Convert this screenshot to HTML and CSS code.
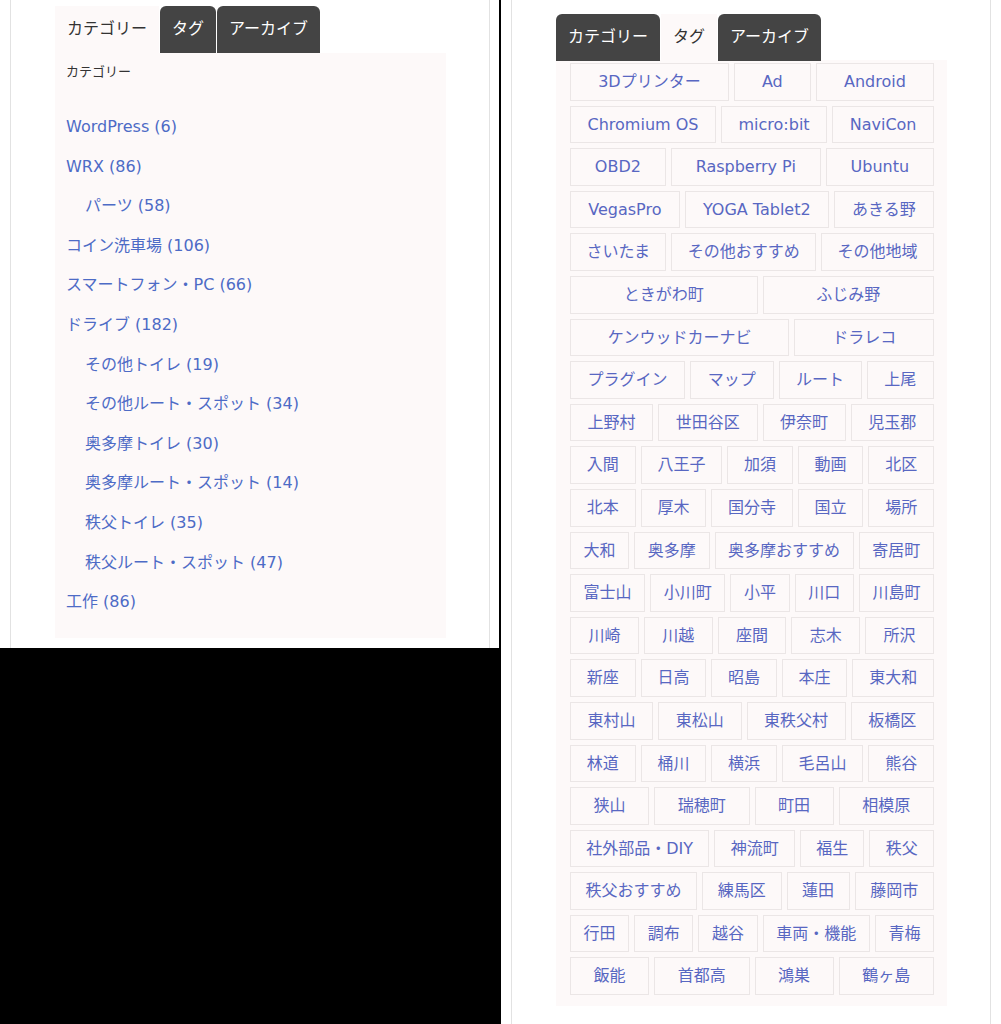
FILE: index.html
```html
<!DOCTYPE html>
<html lang="ja">
<head>
<meta charset="utf-8">
<title>カテゴリー / タグ</title>
<link rel="stylesheet" href="styles.css">
</head>
<body>
<div class="stage">
  <section class="shot shot-left">
    <div class="widget">
      <div class="tabs">
        <div class="tablist">
          <span class="tab active">カテゴリー</span><span class="tab">タグ</span><span class="tab">アーカイブ</span>
        </div>
        <div class="panel cat-panel">
          <h3 class="panel-title">カテゴリー</h3>
          <ul class="cats">
            <li><a href="#">WordPress (6)</a></li>
            <li><a href="#">WRX (86)</a>
              <ul class="sub">
                <li><a href="#">パーツ (58)</a></li>
              </ul>
            </li>
            <li><a href="#">コイン洗車場 (106)</a></li>
            <li><a href="#">スマートフォン・PC (66)</a></li>
            <li><a href="#">ドライブ (182)</a>
              <ul class="sub">
                <li><a href="#">その他トイレ (19)</a></li>
                <li><a href="#">その他ルート・スポット (34)</a></li>
                <li><a href="#">奥多摩トイレ (30)</a></li>
                <li><a href="#">奥多摩ルート・スポット (14)</a></li>
                <li><a href="#">秩父トイレ (35)</a></li>
                <li><a href="#">秩父ルート・スポット (47)</a></li>
              </ul>
            </li>
            <li><a href="#">工作 (86)</a></li>
          </ul>
        </div>
      </div>
    </div>
  </section>

  <section class="shot shot-right">
    <div class="widget">
      <div class="tabs">
        <div class="tablist">
          <span class="tab">カテゴリー</span><span class="tab active">タグ</span><span class="tab">アーカイブ</span>
        </div>
        <div class="panel tag-panel">
          <div class="tagcloud">
            <a href="#" class="tag">3Dプリンター</a>
            <a href="#" class="tag">Ad</a>
            <a href="#" class="tag">Android</a>
            <a href="#" class="tag">Chromium OS</a>
            <a href="#" class="tag">micro:bit</a>
            <a href="#" class="tag">NaviCon</a>
            <a href="#" class="tag">OBD2</a>
            <a href="#" class="tag">Raspberry Pi</a>
            <a href="#" class="tag">Ubuntu</a>
            <a href="#" class="tag">VegasPro</a>
            <a href="#" class="tag">YOGA Tablet2</a>
            <a href="#" class="tag">あきる野</a>
            <a href="#" class="tag">さいたま</a>
            <a href="#" class="tag">その他おすすめ</a>
            <a href="#" class="tag">その他地域</a>
            <a href="#" class="tag">ときがわ町</a>
            <a href="#" class="tag">ふじみ野</a>
            <a href="#" class="tag">ケンウッドカーナビ</a>
            <a href="#" class="tag">ドラレコ</a>
            <a href="#" class="tag">プラグイン</a>
            <a href="#" class="tag">マップ</a>
            <a href="#" class="tag">ルート</a>
            <a href="#" class="tag">上尾</a>
            <a href="#" class="tag">上野村</a>
            <a href="#" class="tag">世田谷区</a>
            <a href="#" class="tag">伊奈町</a>
            <a href="#" class="tag">児玉郡</a>
            <a href="#" class="tag">入間</a>
            <a href="#" class="tag">八王子</a>
            <a href="#" class="tag">加須</a>
            <a href="#" class="tag">動画</a>
            <a href="#" class="tag">北区</a>
            <a href="#" class="tag">北本</a>
            <a href="#" class="tag">厚木</a>
            <a href="#" class="tag">国分寺</a>
            <a href="#" class="tag">国立</a>
            <a href="#" class="tag">場所</a>
            <a href="#" class="tag">大和</a>
            <a href="#" class="tag">奥多摩</a>
            <a href="#" class="tag">奥多摩おすすめ</a>
            <a href="#" class="tag">寄居町</a>
            <a href="#" class="tag">富士山</a>
            <a href="#" class="tag">小川町</a>
            <a href="#" class="tag">小平</a>
            <a href="#" class="tag">川口</a>
            <a href="#" class="tag">川島町</a>
            <a href="#" class="tag">川崎</a>
            <a href="#" class="tag">川越</a>
            <a href="#" class="tag">座間</a>
            <a href="#" class="tag">志木</a>
            <a href="#" class="tag">所沢</a>
            <a href="#" class="tag">新座</a>
            <a href="#" class="tag">日高</a>
            <a href="#" class="tag">昭島</a>
            <a href="#" class="tag">本庄</a>
            <a href="#" class="tag">東大和</a>
            <a href="#" class="tag">東村山</a>
            <a href="#" class="tag">東松山</a>
            <a href="#" class="tag">東秩父村</a>
            <a href="#" class="tag">板橋区</a>
            <a href="#" class="tag">林道</a>
            <a href="#" class="tag">桶川</a>
            <a href="#" class="tag">横浜</a>
            <a href="#" class="tag">毛呂山</a>
            <a href="#" class="tag">熊谷</a>
            <a href="#" class="tag">狭山</a>
            <a href="#" class="tag">瑞穂町</a>
            <a href="#" class="tag">町田</a>
            <a href="#" class="tag">相模原</a>
            <a href="#" class="tag">社外部品・DIY</a>
            <a href="#" class="tag">神流町</a>
            <a href="#" class="tag">福生</a>
            <a href="#" class="tag">秩父</a>
            <a href="#" class="tag">秩父おすすめ</a>
            <a href="#" class="tag">練馬区</a>
            <a href="#" class="tag">蓮田</a>
            <a href="#" class="tag">藤岡市</a>
            <a href="#" class="tag">行田</a>
            <a href="#" class="tag">調布</a>
            <a href="#" class="tag">越谷</a>
            <a href="#" class="tag">車両・機能</a>
            <a href="#" class="tag">青梅</a>
            <a href="#" class="tag">飯能</a>
            <a href="#" class="tag">首都高</a>
            <a href="#" class="tag">鴻巣</a>
            <a href="#" class="tag">鶴ヶ島</a>
          </div>
        </div>
      </div>
    </div>
  </section>
</div>
</body>
</html>
```

FILE: styles.css
```css
html, body {
  margin: 0;
  padding: 0;
  background: #000;
}

body {
  font-family: "DejaVu Sans", "Noto Sans CJK JP", sans-serif;
  color: #333;
}

a {
  text-decoration: none;
}

.stage {
  display: flex;
  align-items: flex-start;
  gap: 2px;
  width: 1001px;
  height: 1024px;
  background: #000;
  overflow: hidden;
}

.shot {
  background: #fff;
  box-sizing: border-box;
}

.shot-left {
  width: 499px;
  height: 648px;
}

.shot-right {
  width: 500px;
  height: 1024px;
}

.widget {
  box-sizing: border-box;
  height: 100%;
  margin: 0 10px;
  border-left: 1px solid #e2e2e2;
  border-right: 1px solid #e2e2e2;
  padding-left: 44px;
}

.shot-left .widget {
  margin-right: 9px;
  padding-top: 6px;
}

.shot-right .widget {
  padding-top: 14px;
}

.tabs {
  width: 391px;
}

.tablist {
  display: flex;
  height: 47px;
}

.tab {
  display: block;
  height: 47px;
  line-height: 46px;
  padding: 0 12px;
  margin-right: 1px;
  font-size: 16px;
  white-space: nowrap;
  background: #444;
  color: #fff;
  border-radius: 6px 6px 0 0;
}

.tab.active {
  background: #fdf9f9;
  color: #333;
  border-radius: 0;
}

.panel {
  background: #fdf9f9;
  box-sizing: border-box;
}

.cat-panel {
  padding: 9px 11px 16px;
}

.panel-title {
  margin: 0;
  font-size: 13px;
  font-weight: normal;
  line-height: 20px;
  color: #333;
}

.cats {
  list-style: none;
  margin: 25px 0 0;
  padding: 0;
}

.cats li {
  font-size: 16px;
  line-height: 39.6px;
}

.cats .sub {
  list-style: none;
  margin: 0;
  padding: 0 0 0 19px;
}

.cats a {
  color: #4d6bc6;
}

.tag-panel {
  margin-top: -1px;
  padding: 3px 13px 11px 14px;
}

.tagcloud {
  display: flex;
  flex-wrap: wrap;
  gap: 5px;
}

.tag {
  flex: 1 1 auto;
  box-sizing: border-box;
  border: 1px solid #ebe6e6;
  padding: 6px 12px;
  line-height: 23.6px;
  font-size: 16px;
  text-align: center;
  white-space: nowrap;
  color: #5867c2;
}
```
